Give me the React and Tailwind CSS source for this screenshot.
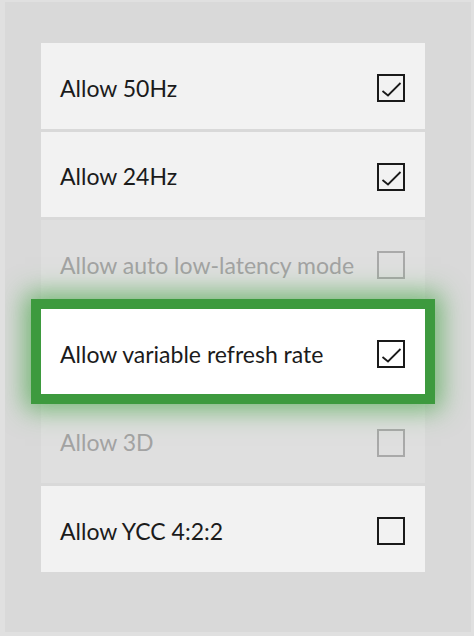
import React from "react";

const rows = [
  { label: "Allow 50Hz", checked: true },
  { label: "Allow 24Hz", checked: true },
  { label: "Allow auto low-latency mode", checked: false, disabled: true },
  { label: "Allow variable refresh rate", checked: true, focused: true },
  { label: "Allow 3D", checked: false, disabled: true },
  { label: "Allow YCC 4:2:2", checked: false },
];

const CheckBox = ({ checked, disabled }) => {
  const color = disabled ? "#a9a9a9" : "#1a1a1a";
  return (
    <svg width="28" height="28" viewBox="0 0 28 28" className="shrink-0">
      <rect x="1" y="1" width="26" height="26" fill="none" stroke={color} strokeWidth="2" />
      {checked && (
        <polyline
          points="5.5,17 11,21.5 23.5,9"
          fill="none"
          stroke={color}
          strokeWidth="1.8"
          strokeLinejoin="miter"
        />
      )}
    </svg>
  );
};

const Row = ({ label, checked, disabled, focused }) => {
  const bg = focused ? "bg-white" : disabled ? "bg-[#dfdfdf]" : "bg-[#f2f2f2]";
  return (
    <div
      className={`h-[85.6px] flex items-center justify-between pl-[19px] pr-[20px] pt-[5px] ${bg} ${
        focused
          ? "relative z-10 outline-[10px] outline-solid outline-[#3d9a3e] shadow-[0_0_24px_16px_rgba(70,165,70,0.7)]"
          : ""
      }`}
    >
      <span
        className={`text-[23px] font-normal leading-none whitespace-nowrap ${
          disabled ? "text-[#a3a3a3]" : "text-[#1b1b1b]"
        }`}
      >
        {label}
      </span>
      <CheckBox checked={checked} disabled={disabled} />
    </div>
  );
};

export default function App() {
  return (
    <div
      className="w-[474px] h-[636px] bg-[#d9d9d9] border-t-2 border-l-[5px] border-r-[3px] border-b-[4px] border-[#e0e0e0] overflow-hidden"
      style={{ fontFamily: 'Lato, "Open Sans", sans-serif' }}
    >
      <div className="ml-[36px] mt-[41px] w-[384px] flex flex-col gap-[3px]">
        {rows.map((r) => (
          <Row key={r.label} {...r} />
        ))}
      </div>
    </div>
  );
}
